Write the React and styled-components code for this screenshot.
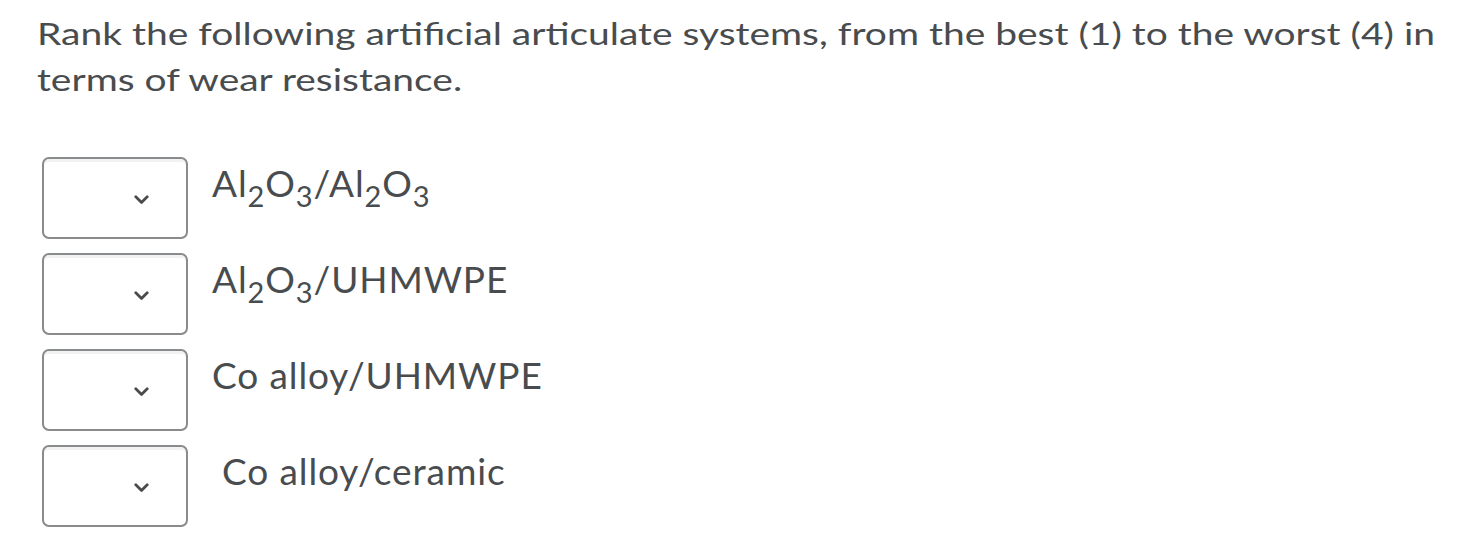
import React from 'react'
import styled, { createGlobalStyle } from 'styled-components'

const GlobalStyle = createGlobalStyle`
  body {
    margin: 0;
    background: #fff;
    font-family: Lato, "Noto Sans", sans-serif;
    color: #494c4e;
  }
`

const Page = styled.div`
  padding: 10px 0 0 37px;
`

// the prompt text is set wide, so the block is stretched sideways
const Question = styled.p`
  margin: 0;
  width: 1150px;
  font-size: 31.5px;
  line-height: 46px;
  transform: scaleX(1.237);
  transform-origin: left top;
`

const List = styled.div`
  display: flex;
  flex-direction: column;
  gap: 14px;
  margin-top: 55px;
  margin-left: 5px;
`

const Row = styled.div`
  display: flex;
  align-items: flex-start;
  height: 82px;
`

const Select = styled.div`
  position: relative;
  box-sizing: border-box;
  width: 146px;
  height: 82px;
  border: 2px solid #8a8b8c;
  border-radius: 7px;
  background: #fff;
  box-shadow: inset 0 3px 0 0 #f1f2f3;
  flex-shrink: 0;
`

const Chevron = styled.svg`
  position: absolute;
  left: 90px;
  top: 36px;
`

const Label = styled.div`
  margin-left: ${({indent}) => indent}px;
  padding-top: 4px;
  font-size: 37px;
  line-height: 44px;
  letter-spacing: 0.9px;
  white-space: nowrap;

  sub {
    font-size: 29px;
    line-height: 0;
    vertical-align: -10px;
  }
`

const Formula = ({ parts }) => (
  <>
    {parts.map((p, i) => typeof p === 'number' ? <sub key={i}>{p}</sub> : <span key={i}>{p}</span>)}
  </>
)

const items = [
  { parts: ['Al', 2, 'O', 3, '/Al', 2, 'O', 3], indent: 24 },
  { parts: ['Al', 2, 'O', 3, '/UHMWPE'], indent: 24 },
  { parts: ['Co alloy/UHMWPE'], indent: 24 },
  { parts: ['Co alloy/ceramic'], indent: 34 },
]

const App = () => {
  return (
    <>
      <GlobalStyle />
      <Page>
        <Question>
          Rank the following artificial articulate systems, from the best (1) to the worst (4) in terms of wear resistance.
        </Question>
        <List>
          {items.map((item, index) => (
            <Row key={index}>
              <Select>
                <Chevron width="15" height="10" viewBox="0 0 15 10">
                  <path d="M1.8 1.8 L7.5 7.5 L13.2 1.8" fill="none" stroke="#494c4e" strokeWidth="2.8" strokeLinecap="round" strokeLinejoin="round" />
                </Chevron>
              </Select>
              <Label indent={item.indent}>
                <Formula parts={item.parts} />
              </Label>
            </Row>
          ))}
        </List>
      </Page>
    </>
  )
}

export default App
